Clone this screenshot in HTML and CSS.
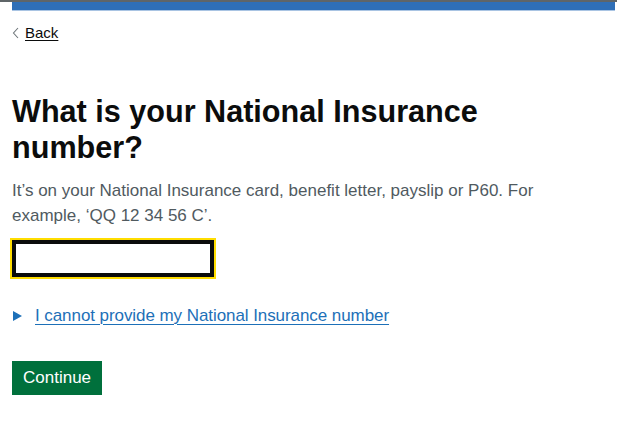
FILE: index.html
```html
<!DOCTYPE html>
<html lang="en">
<head>
<meta charset="utf-8">
<title>What is your National Insurance number?</title>
<link rel="stylesheet" href="styles.css">
</head>
<body>
<header class="site-header">
  <div class="header-line"></div>
  <div class="header-bar"></div>
</header>
<main class="page">
  <a class="back-link" href="#">
    <svg class="back-chevron" width="7" height="12" viewBox="0 0 7 12" aria-hidden="true"><polyline points="6,1 1.5,6 6,11" fill="none" stroke="#6f777b" stroke-width="1.1"/></svg>
    <span class="back-text">Back</span>
  </a>
  <h1 class="heading">What is your National Insurance number?</h1>
  <p class="hint">It’s on your National Insurance card, benefit letter, payslip or P60. For example, ‘QQ 12 34 56 C’.</p>
  <input class="text-input" type="text" aria-label="National Insurance number">
  <details class="details">
    <summary class="summary"><span class="summary-text">I cannot provide my National Insurance number</span></summary>
  </details>
  <button class="button" type="submit">Continue</button>
</main>
</body>
</html>
```

FILE: styles.css
```css
html, body {
  margin: 0;
  padding: 0;
  background: #ffffff;
}
body {
  font-family: "Liberation Sans", Arial, sans-serif;
  color: #0b0c0c;
}
.site-header {
  display: flex;
  flex-direction: column;
}
.header-line {
  height: 2px;
  background: #5f6568;
}
.header-bar {
  height: 8px;
  margin: 0 2px 0 12px;
  background: #2f6fb7;
  border-bottom: 1px solid #a9c4e3;
}
.page {
  padding: 0 12px;
  display: flex;
  flex-direction: column;
  align-items: flex-start;
}
.back-link {
  margin-top: 12px;
  display: flex;
  align-items: center;
  gap: 6px;
  height: 20px;
  color: #0b0c0c;
  font-size: 15px;
  line-height: 20px;
  text-decoration: none;
}
.back-chevron {
  display: block;
}
.back-text {
  text-decoration: underline;
  text-underline-offset: 2px;
  text-decoration-thickness: 1px;
}
.heading {
  margin: 50px 0 0 0;
  font-size: 30.6px;
  line-height: 36px;
  font-weight: 700;
  max-width: 480px;
}
.hint {
  margin: 13px 0 0 0;
  font-size: 17px;
  line-height: 25px;
  color: #505a5f;
  max-width: 560px;
}
.text-input {
  margin: 12px 0 0 0;
  box-sizing: border-box;
  width: 202px;
  height: 37px;
  border: 2px solid #0b0c0c;
  border-radius: 0;
  box-shadow: inset 0 0 0 2px #0b0c0c;
  outline: 2px solid #ffdd00;
  outline-offset: 0;
  padding: 4px 6px;
  font-family: inherit;
  font-size: 17px;
  background: #fff;
}
.details {
  margin-top: 26px;
}
.summary {
  display: flex;
  align-items: center;
  list-style: none;
  cursor: pointer;
  font-size: 17px;
  line-height: 25px;
  letter-spacing: -0.07px;
  color: #1d70b8;
}
.summary::-webkit-details-marker {
  display: none;
}
.summary::before {
  content: "";
  display: block;
  width: 0;
  height: 0;
  margin: 0 13px 0 1px;
  border-style: solid;
  border-width: 5px 0 5px 9px;
  border-color: transparent transparent transparent #1d70b8;
}
.summary-text {
  text-decoration: underline;
  text-underline-offset: 3px;
  text-decoration-thickness: 1px;
}
.button {
  margin-top: 33px;
  box-sizing: border-box;
  height: 34px;
  padding: 0 11px;
  border: 0;
  border-radius: 0;
  background: #00703c;
  color: #ffffff;
  box-shadow: 0 2px 0 #002d18;
  font-family: inherit;
  font-size: 17px;
  line-height: 34px;
  cursor: pointer;
}
```
